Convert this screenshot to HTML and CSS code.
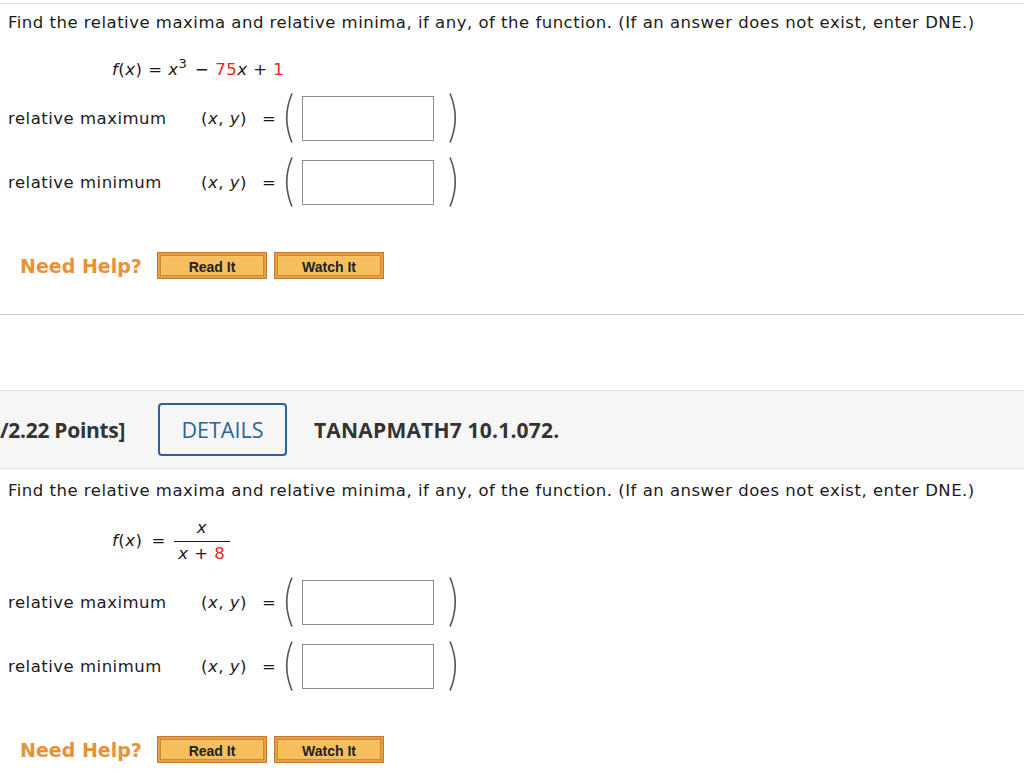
FILE: index.html
```html
<!DOCTYPE html>
<html>
<head>
<meta charset="utf-8">
<link rel="stylesheet" href="styles.css">
</head>
<body>
<div class="page">
  <section class="q q1">
    <p class="prompt">Find the relative maxima and relative minima, if any, of the function. (If an answer does not exist, enter DNE.)</p>
    <div class="formula f1"><i>f</i>(<i>x</i>) = <i>x</i><sup>3</sup> &minus; <span class="red">75</span><i>x</i> + <span class="red">1</span></div>
    <div class="ans first">
      <span class="label">relative maximum</span>
      <span class="xy">(<i>x</i>, <i>y</i>)</span>
      <span class="eq">=</span>
      <svg class="paren" viewBox="0 0 10 52" width="10" height="52"><path d="M9 1.5 Q-1.5 26 9 50.5" /></svg>
      <span class="box"></span>
      <svg class="paren rp" viewBox="0 0 10 52" width="10" height="52"><path d="M1 1.5 Q11.5 26 1 50.5" /></svg>
    </div>
    <div class="ans">
      <span class="label">relative minimum</span>
      <span class="xy">(<i>x</i>, <i>y</i>)</span>
      <span class="eq">=</span>
      <svg class="paren" viewBox="0 0 10 52" width="10" height="52"><path d="M9 1.5 Q-1.5 26 9 50.5" /></svg>
      <span class="box"></span>
      <svg class="paren rp" viewBox="0 0 10 52" width="10" height="52"><path d="M1 1.5 Q11.5 26 1 50.5" /></svg>
    </div>
    <div class="help">
      <span class="need">Need Help?</span>
      <span class="btn">Read It</span>
      <span class="btn">Watch It</span>
    </div>
  </section>
  <div class="gap"></div>
  <header class="band">
    <span class="points">/2.22 Points]</span>
    <span class="details">DETAILS</span>
    <span class="code">TANAPMATH7 10.1.072.</span>
  </header>
  <section class="q q2">
    <p class="prompt">Find the relative maxima and relative minima, if any, of the function. (If an answer does not exist, enter DNE.)</p>
    <div class="formula f2">
      <span><i>f</i>(<i>x</i>)</span>
      <span class="eq2">=</span>
      <span class="frac"><span class="num"><i>x</i></span><span class="den"><i>x</i> + <span class="red">8</span></span></span>
    </div>
    <div class="ans first2">
      <span class="label">relative maximum</span>
      <span class="xy">(<i>x</i>, <i>y</i>)</span>
      <span class="eq">=</span>
      <svg class="paren" viewBox="0 0 10 52" width="10" height="52"><path d="M9 1.5 Q-1.5 26 9 50.5" /></svg>
      <span class="box"></span>
      <svg class="paren rp" viewBox="0 0 10 52" width="10" height="52"><path d="M1 1.5 Q11.5 26 1 50.5" /></svg>
    </div>
    <div class="ans">
      <span class="label">relative minimum</span>
      <span class="xy">(<i>x</i>, <i>y</i>)</span>
      <span class="eq">=</span>
      <svg class="paren" viewBox="0 0 10 52" width="10" height="52"><path d="M9 1.5 Q-1.5 26 9 50.5" /></svg>
      <span class="box"></span>
      <svg class="paren rp" viewBox="0 0 10 52" width="10" height="52"><path d="M1 1.5 Q11.5 26 1 50.5" /></svg>
    </div>
    <div class="help">
      <span class="need">Need Help?</span>
      <span class="btn">Read It</span>
      <span class="btn">Watch It</span>
    </div>
  </section>
</div>
</body>
</html>
```

FILE: styles.css
```css
html, body { margin: 0; padding: 0; background: #fff; }
body { font-family: "DejaVu Sans", Verdana, sans-serif; color: #1a1a1a; overflow: hidden; }
.page { margin-top: 3px; border-top: 1px solid #dcdcdc; }
.q { padding-left: 8px; }
.prompt { margin: 0; font-size: 16.5px; line-height: 20px; letter-spacing: 0.5px; white-space: nowrap; }
.q1 .prompt { margin-top: 9px; }
.formula { font-size: 16.5px; line-height: 20px; padding-left: 104px; letter-spacing: 0.5px; }
.f1 { margin-top: 27px; }
.f1 sup { font-size: 13px; line-height: 0; position: relative; top: -7px; vertical-align: baseline; margin-right: 2px; }
.red { color: #e8261e; }
.ans { display: flex; align-items: center; height: 52px; font-size: 16.5px; letter-spacing: 0.5px; margin-top: 12px; }
.ans.first { margin-top: 12px; }
.label { width: 193px; }
.xy { width: 61px; }
.eq { width: 21px; }
.paren { display: block; }
.paren path { fill: none; stroke: #555; stroke-width: 1.6; }
.box { width: 132px; height: 45px; box-sizing: border-box; border: 1px solid #8c8c8c; margin-left: 9px; margin-right: 15px; }
.help { display: flex; align-items: center; height: 27px; margin-top: 44px; padding-left: 12px; }
.need { font-size: 19px; font-weight: bold; color: #e8913a; width: 137px; }
.btn { width: 110px; height: 27px; box-sizing: border-box; border: 1px solid #c27a33; background: #f6be5d; box-shadow: inset 0 0 0 2px #ec9c40, inset 0 0 0 3px #c98a3e, inset 0 4px 2px -1px #fcd58c; font-family: "Liberation Sans", Arial, sans-serif; font-weight: bold; font-size: 14px; color: #222; display: flex; align-items: center; justify-content: center; padding-top: 2px; margin-right: 7px; }
.gap { height: 35px; border-bottom: 1px solid #cccccc; }
.band { margin-top: 75px; height: 77px; background: #f6f6f6; border-top: 1px solid #e0e0e0; border-bottom: 1px solid #e0e0e0; display: flex; align-items: center; font-family: "Open Sans", sans-serif; font-size: 21px; color: #333; }
.points { font-weight: bold; width: 158px; letter-spacing: -0.3px; }
.details { width: 125px; height: 49px; border: 2px solid #2d6195; border-radius: 4px; color: #2a6496; display: flex; align-items: center; justify-content: center; font-size: 21.5px; }
.code { font-weight: bold; margin-left: 27px; letter-spacing: 0.2px; }
.q2 .prompt { margin-top: 12px; }
.f2 { display: flex; align-items: center; height: 48px; margin-top: 16px; }
.eq2 { margin-left: 9px; margin-right: 8px; }
.frac { display: inline-flex; flex-direction: column; align-items: center; width: 56px; }
.num { line-height: 20px; border-bottom: 1px solid #1a1a1a; width: 100%; text-align: center; padding-bottom: 3px; }
.den { line-height: 20px; padding-top: 2px; }
.ans.first2 { margin-top: 11px; }
.q2 .help { margin-top: 44px; }
```
